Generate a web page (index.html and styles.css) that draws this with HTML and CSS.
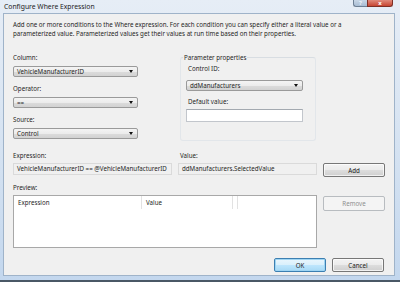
FILE: index.html
```html
<!DOCTYPE html>
<html lang="en">
<head>
  <meta charset="UTF-8">
  <title>Configure Where Expression</title>
  <link rel="stylesheet" href="styles.css">
</head>
<body>
  <div class="window">
    <div class="titlebar">
      <span class="title">Configure Where Expression</span>
      <div class="caption-buttons">
        <span class="cap cap-help">?</span>
        <span class="cap cap-close">x</span>
      </div>
    </div>

    <div class="client">
      <p class="intro">
        Add one or more conditions to the Where expression. For each condition you can specify either a literal value or a<br>
        parameterized value. Parameterized values get their values at run time based on their properties.
      </p>

      <div class="top">
        <div class="left-col">
          <div class="label">Column:</div>
          <div class="combo">VehicleManufacturerID</div>
          <div class="label">Operator:</div>
          <div class="combo">==</div>
          <div class="label">Source:</div>
          <div class="combo">Control</div>
        </div>

        <fieldset class="group">
          <legend>Parameter properties</legend>
          <div class="label">Control ID:</div>
          <div class="combo combo-param">ddManufacturers</div>
          <div class="label">Default value:</div>
          <div class="textbox"></div>
        </fieldset>
      </div>

      <div class="expr-grid">
        <div class="label">Expression:</div>
        <div class="label label-value">Value:</div>
        <div></div>

        <div class="readonly">VehicleManufacturerID == @VehicleManufacturerID</div>
        <div class="readonly">ddManufacturers.SelectedValue</div>
        <button class="btn">Add</button>

        <div class="label preview-label">Preview:</div>

        <div class="listview">
          <div class="lv-header">
            <span class="lv-col lv-col-expr">Expression</span>
            <span class="lv-col lv-col-value">Value</span>
            <span class="lv-col lv-col-rest"></span>
          </div>
        </div>
        <div><button class="btn btn-disabled">Remove</button></div>
      </div>

      <div class="footer">
        <button class="btn btn-default">OK</button>
        <button class="btn">Cancel</button>
      </div>
    </div>
  </div>
</body>
</html>
```

FILE: styles.css
```css
* {
  margin: 0;
  padding: 0;
  box-sizing: border-box;
}

body {
  font-family: "Noto Sans", "Open Sans", sans-serif;
  font-size: 6.2px;
  color: #262626;
  background: #fff;
}

.window {
  width: 400px;
  height: 282px;
  background: linear-gradient(#e6edf6, #d3e1f1 60%, #c3d7ee);
  border-bottom: 2px solid #4a5866;
}

/* title bar */
.titlebar {
  height: 13px;
  display: flex;
  justify-content: space-between;
  align-items: flex-start;
}

.title {
  padding-left: 4px;
  line-height: 13px;
  font-size: 6.8px;
  color: #1a1a1a;
}

.caption-buttons {
  display: flex;
  margin-right: 7px;
}

.cap {
  height: 7px;
  line-height: 6px;
  text-align: center;
  font-size: 6px;
  font-weight: bold;
  color: #fff;
  border: 1px solid #6d7f94;
  border-top: none;
}

.cap-help {
  width: 14px;
  background: linear-gradient(#c8d6e6, #a9bdd4);
  color: #eef3f8;
  border-radius: 0 0 0 3px;
  border-right: none;
}

.cap-close {
  width: 26px;
  background: linear-gradient(#e08a7c, #c74532);
  border-color: #7e2f26;
  border-radius: 0 0 3px 0;
}

/* client area */
.client {
  margin: 0 5px 0 3px;
  height: 263px;
  background: #f0f0f0;
  border: 1px solid #9fb3c9;
  padding: 6px 10px 0 9px;
}

.intro {
  line-height: 9px;
}

.label {
  line-height: 9px;
  white-space: nowrap;
}

.top {
  display: flex;
  margin-top: 15px;
}

.left-col {
  width: 125px;
}

.left-col .label {
  margin-bottom: 4px;
}

.combo {
  position: relative;
  height: 11px;
  line-height: 9px;
  padding-left: 3px;
  border: 1px solid #9a9a9a;
  border-radius: 2px;
  background: linear-gradient(#f4f4f4, #ececec 50%, #dcdcdc 51%, #d2d2d2);
  margin-bottom: 7px;
}

.combo::after {
  content: "";
  position: absolute;
  right: 4px;
  top: 3px;
  border-left: 2.5px solid transparent;
  border-right: 2.5px solid transparent;
  border-top: 3px solid #111;
}

/* parameter group */
.group {
  margin-left: 42px;
  width: 136px;
  height: 88px;
  border: 1px solid #e2e6ea;
  border-top-color: #d8dde2;
  border-radius: 3px;
  padding: 2px 5px 0 5px;
}

.group legend {
  line-height: 9px;
  margin-left: -3px;
  padding: 0 1px;
}

.group .label {
  padding-left: 2px;
}

.combo-param {
  width: 117px;
  margin-top: 7px;
  margin-bottom: 6px;
}

.textbox {
  width: 117px;
  height: 13px;
  margin-top: 3px;
  background: #fff;
  border: 1px solid #c2c6cc;
  border-top-color: #a3a9b0;
}

/* expression / preview */
.expr-grid {
  display: grid;
  grid-template-columns: 159px 139px 62px;
  grid-template-rows: 12px 20px 12px 53px;
  column-gap: 6px;
  margin-top: 5px;
}

.label-value {
  padding-left: 2px;
}

.readonly {
  height: 12px;
  line-height: 10px;
  padding-left: 3px;
  border: 1px solid #dadada;
  background: #f0f0f0;
  white-space: nowrap;
  overflow: hidden;
}

.preview-label {
  grid-column: 1 / 4;
}

.listview {
  grid-column: 1 / 3;
  background: #fff;
  border: 1px solid #a8a8a8;
}

.lv-header {
  display: flex;
  height: 13px;
  line-height: 13px;
}

.lv-col {
  border-right: 1px solid #e2e2e2;
  padding-left: 4px;
}

.lv-col-expr {
  width: 128px;
}

.lv-col-value {
  width: 91px;
}

.btn {
  font-family: inherit;
  font-size: 6.2px;
  color: #222;
  width: 62px;
  height: 14px;
  border: 1px solid #777;
  border-radius: 2px;
  background: linear-gradient(#f3f3f3, #ebebeb 50%, #dddddd 51%, #cfcfcf);
  box-shadow: inset 0 0 0 1px rgba(255, 255, 255, 0.7);
}

.btn-disabled {
  height: 15px;
  margin-top: 1px;
  color: #8f8f8f;
  border-color: #b8bcc0;
  background: #f4f4f4;
  box-shadow: none;
}

.footer {
  display: flex;
  justify-content: flex-end;
  gap: 6px;
  margin-top: 10px;
}

.footer .btn {
  width: 52px;
}

.btn-default {
  border-color: #3c7fb1;
  background: linear-gradient(#eaf6fd, #d9f0fc 50%, #bee6fd 51%, #a7d9f5);
  box-shadow: inset 0 0 0 1px #9fd5f3;
}
```
